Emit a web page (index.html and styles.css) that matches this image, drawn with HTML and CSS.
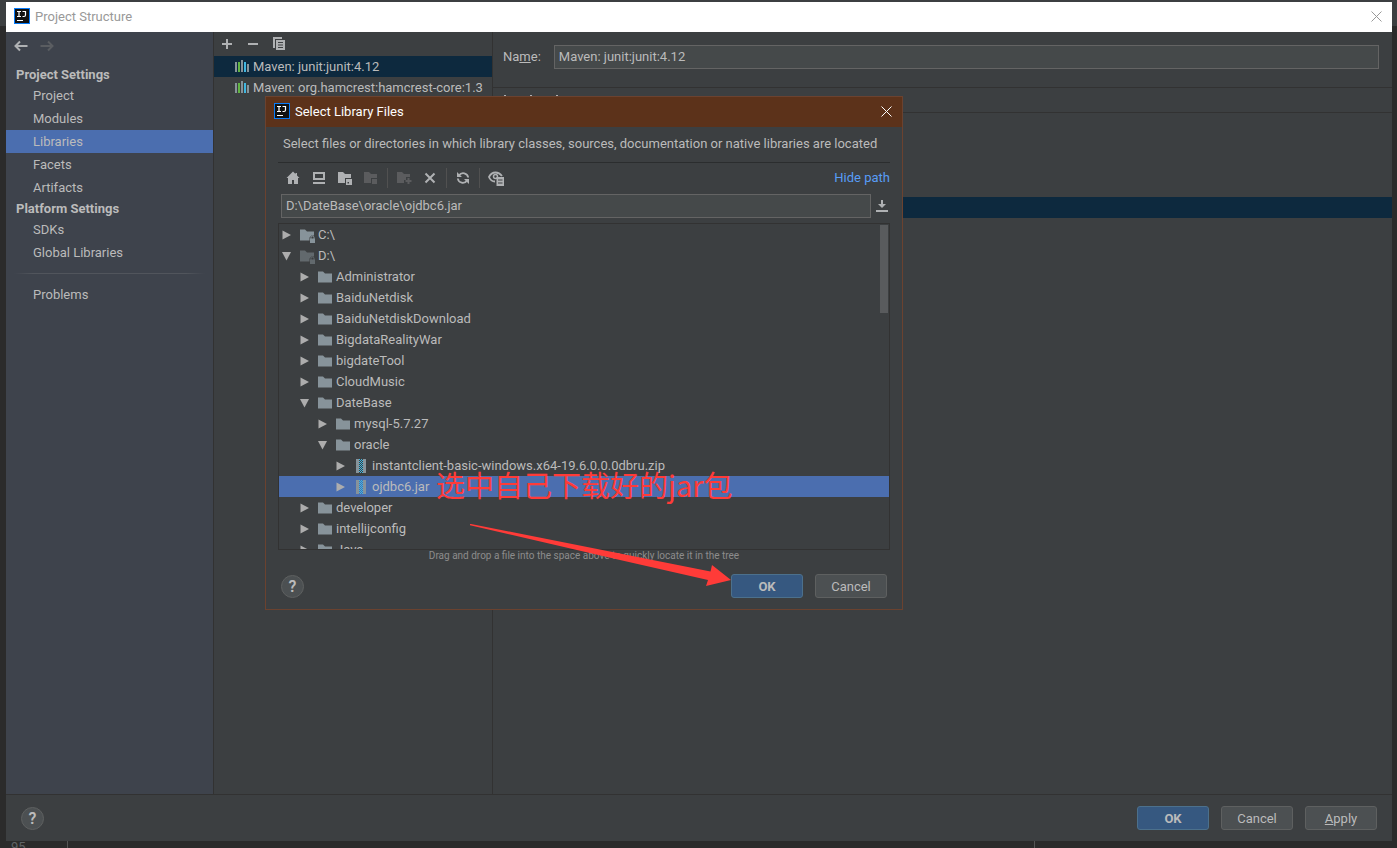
FILE: index.html
```html
<!DOCTYPE html>
<html lang="en">

<head>
    <meta charset="UTF-8">
    <title>Project Structure</title>
    <link rel="stylesheet" href="styles.css">
</head>

<body>

    <!-- Shared icons -->
    <svg class="sprite" aria-hidden="true">
        <symbol id="i-logo" viewBox="0 0 16 16">
            <rect x="0" y="0" width="16" height="16" fill="#087cfa" />
            <rect x="1" y="1" width="14" height="14" fill="#111" />
            <path d="M3 3.500h4M5 3.500v5M3 8.500h4M8.500 3.500h3v3.500q0 1.500-1.500 1.500h-1.500M3 12.500h6" fill="none" stroke="#fff" stroke-width="1.200" />
        </symbol>
        <symbol id="i-add" viewBox="0 0 16 16">
            <path d="M8 3v10M3 8h10" stroke="#afb1b3" stroke-width="2" />
        </symbol>
        <symbol id="i-remove" viewBox="0 0 16 16">
            <path d="M3 8h10" stroke="#afb1b3" stroke-width="2" />
        </symbol>
        <symbol id="i-folder" viewBox="0 0 16 16">
            <path d="M1 2.500h5l2 2h7v9H1z" fill="#87939a" />
        </symbol>
        <symbol id="i-drive" viewBox="0 0 16 16">
            <path d="M1 2.500h5l2 2h7v4h-2.500l-2 2v3H1z" fill="currentColor" />
            <path d="M11 11.500h5V16h-5z" fill="currentColor" />
            <path d="M12 12v-1.500a1.500 1.500 0 0 1 3 0V12" fill="none" stroke="currentColor" />
        </symbol>
        <symbol id="i-zip" viewBox="0 0 16 16">
            <path d="M3 1h3v14H3zM10 1h3v14h-3z" fill="#87939a" />
            <path d="M6.500 1v14M8.500 1v14" stroke="#40b6e0" stroke-dasharray="1 1" />
            <path d="M7.500 2v13M9.500 2v13" stroke="#40b6e0" stroke-dasharray="1 1" />
        </symbol>
        <symbol id="i-right" viewBox="0 0 10 10">
            <path d="M0.500 0.500L9 5L0.500 9.500z" fill="#adadad" />
        </symbol>
        <symbol id="i-down" viewBox="0 0 10 10">
            <path d="M0 1h9L4.500 9.500z" fill="#adadad" />
        </symbol>
        <symbol id="i-lib" viewBox="0 0 16 14">
            <path d="M1 2h2v10H1zM7 0h2v12H7zM13 4h2v8h-2z" fill="#87939a" />
            <path d="M4 2h2v10H4z" fill="#62b543" />
            <path d="M10 2h2v10h-2z" fill="#40b6e0" />
        </symbol>
    </svg>

    <main class="window">
        <header class="titlebar">
            <svg class="logo"><use href="#i-logo" /></svg>
            <span class="title">Project Structure</span>
            <button class="close" aria-label="Close">
                <svg viewBox="0 0 11 11"><path d="M0.500 0.500l10 10M10.500 0.500l-10 10" /></svg>
            </button>
        </header>

        <div class="panes">
            <nav class="sidebar">
                <div class="history">
                    <button class="icon-btn" aria-label="Back">
                        <svg viewBox="0 0 16 16"><path d="M14.500 8H3M7 3.500L2.500 8L7 12.500" fill="none" stroke="#afb1b3" stroke-width="2" /></svg>
                    </button>
                    <button class="icon-btn" aria-label="Forward" disabled>
                        <svg viewBox="0 0 16 16"><path d="M1.500 8H13M9 3.500L13.500 8L9 12.500" fill="none" stroke="#5a5d61" stroke-width="2" /></svg>
                    </button>
                </div>
                <h2>Project Settings</h2>
                <ul>
                    <li><a href="#">Project</a></li>
                    <li><a href="#">Modules</a></li>
                    <li><a href="#" class="active">Libraries</a></li>
                    <li><a href="#">Facets</a></li>
                    <li><a href="#">Artifacts</a></li>
                </ul>
                <h2>Platform Settings</h2>
                <ul>
                    <li><a href="#">SDKs</a></li>
                    <li><a href="#">Global Libraries</a></li>
                </ul>
                <hr>
                <ul>
                    <li><a href="#">Problems</a></li>
                </ul>
            </nav>

            <section class="libraries">
                <div class="lib-tools">
                    <button class="icon-btn" aria-label="Add">
                        <svg><use href="#i-add" /></svg>
                    </button>
                    <button class="icon-btn" aria-label="Remove">
                        <svg><use href="#i-remove" /></svg>
                    </button>
                    <button class="icon-btn" aria-label="Copy">
                        <svg viewBox="0 0 16 16">
                            <path d="M2 1h9v2H4v9H2z" fill="#afb1b3" />
                            <path d="M5 4h9v10H5zM7 6v1h5V6zM7 8.500v1h5v-1zM7 11v1h5v-1z" fill="#afb1b3" fill-rule="evenodd" />
                        </svg>
                    </button>
                </div>
                <ul>
                    <li class="selected"><svg><use href="#i-lib" /></svg>Maven: junit:junit:4.12</li>
                    <li><svg><use href="#i-lib" /></svg>Maven: org.hamcrest:hamcrest-core:1.3</li>
                </ul>
            </section>

            <section class="details">
                <div class="name-row">
                    <label for="libName">Na<u>m</u>e:</label>
                    <input type="text" id="libName" value="Maven: junit:junit:4.12">
                </div>
                <div class="root-tools">
                    <button class="icon-btn" aria-label="Add root">
                        <svg><use href="#i-add" /></svg>
                    </button>
                    <button class="icon-btn" aria-label="Add documentation">
                        <svg><use href="#i-add" /></svg>
                    </button>
                    <button class="icon-btn" aria-label="Add excluded root">
                        <svg><use href="#i-add" /></svg>
                    </button>
                    <button class="icon-btn" aria-label="Remove root">
                        <svg><use href="#i-remove" /></svg>
                    </button>
                </div>
                <div class="roots">
                    <div class="root-selected"></div>
                </div>
            </section>
        </div>

        <footer class="buttons">
            <button class="help" aria-label="Help">?</button>
            <button class="btn primary">OK</button>
            <button class="btn">Cancel</button>
            <button class="btn"><u>A</u>pply</button>
        </footer>
    </main>

    <!-- Editor behind the window -->
    <div class="editor-strip">
        <span class="gutter">95</span>
        <span class="guide"></span>
    </div>

    <section class="dialog" role="dialog" aria-labelledby="dialogTitle">
        <header class="dialog-title">
            <svg class="logo"><use href="#i-logo" /></svg>
            <span class="title" id="dialogTitle">Select Library Files</span>
            <button class="close" aria-label="Close">
                <svg viewBox="0 0 11 11"><path d="M0.500 0.500l10 10M10.500 0.500l-10 10" /></svg>
            </button>
        </header>

        <div class="dialog-body">
            <p class="description">Select files or directories in which library classes, sources, documentation or native libraries are located</p>

            <div class="toolbar">
                <button class="icon-btn" aria-label="Home">
                    <svg viewBox="0 0 16 16"><path d="M8 1.500L1.500 8H3v6h4v-4h2v4h4V8h1.500L12 5.500V3h-1.500v1z" fill="#afb1b3" /></svg>
                </button>
                <button class="icon-btn" aria-label="Desktop">
                    <svg viewBox="0 0 16 16"><path d="M2 2h12v8H2zM4 4v4h8V4zM2 12h12v2H2z" fill="#afb1b3" fill-rule="evenodd" /></svg>
                </button>
                <button class="icon-btn" aria-label="Project directory">
                    <svg viewBox="0 0 16 16">
                        <path d="M1 2h5l2 2h6v4H8v5H1z" fill="#afb1b3" />
                        <path d="M9 9h6v6H9zM10.500 12v1.500H12V12z" fill="#afb1b3" fill-rule="evenodd" />
                    </svg>
                </button>
                <button class="icon-btn" aria-label="Module directory" disabled>
                    <svg viewBox="0 0 16 16">
                        <path d="M1 2h5l2 2h6v4H8v5H1z" fill="#5b5c5e" />
                        <path d="M9 9h5v5H9z" fill="#5b5c5e" />
                    </svg>
                </button>
                <span class="divider"></span>
                <button class="icon-btn" aria-label="New folder" disabled>
                    <svg viewBox="0 0 16 16">
                        <path d="M1 2h5l2 2h6v3h-4v3H8v3H1z" fill="#5b5c5e" />
                        <path d="M12.500 8v6M9.500 11h6" stroke="#5b5c5e" stroke-width="2" />
                    </svg>
                </button>
                <button class="icon-btn" aria-label="Delete">
                    <svg viewBox="0 0 16 16"><path d="M3.500 3.500l9 9M12.500 3.500l-9 9" stroke="#afb1b3" stroke-width="2" /></svg>
                </button>
                <span class="divider"></span>
                <button class="icon-btn" aria-label="Refresh">
                    <svg viewBox="0 0 16 16">
                        <path d="M4 5.500a5 5 0 0 1 9.200 2M12 10.500a5 5 0 0 1-9.200-2" fill="none" stroke="#afb1b3" stroke-width="1.800" />
                        <path d="M2 2v5h5zM14 14V9H9z" fill="#afb1b3" />
                    </svg>
                </button>
                <span class="divider"></span>
                <button class="icon-btn" aria-label="Show hidden files">
                    <svg viewBox="0 0 16 16">
                        <path d="M7 11.500C4 11.500 2 9.500 1 7C2.500 4 5 2.500 7.500 2.500S12.500 4 14 6" fill="none" stroke="#afb1b3" stroke-width="1.800" />
                        <circle cx="7.500" cy="6.500" r="2" fill="none" stroke="#afb1b3" stroke-width="1.500" />
                        <path d="M8.500 7H16v9H8.500zM10 9.500v1h4.500v-1zM10 12.500v1h4.500v-1z" fill="#afb1b3" fill-rule="evenodd" />
                    </svg>
                </button>
                <a href="#" class="hide-path">Hide path</a>
            </div>

            <div class="path-row">
                <input type="text" aria-label="Path" value="D:\DateBase\oracle\ojdbc6.jar">
                <button class="icon-btn" aria-label="Path history">
                    <svg viewBox="0 0 16 16"><path d="M7 2h2v4h3L8 10L4 6h3zM2 12h12v2H2z" fill="#afb1b3" /></svg>
                </button>
            </div>

            <div class="tree">
                <ul>
                    <li><svg class="arrow"><use href="#i-right" /></svg><svg class="icon drive"><use href="#i-drive" /></svg>C:\</li>
                    <li><svg class="arrow"><use href="#i-down" /></svg><svg class="icon drive dim"><use href="#i-drive" /></svg>D:\</li>
                    <li class="level-1"><svg class="arrow"><use href="#i-right" /></svg><svg class="icon"><use href="#i-folder" /></svg>Administrator</li>
                    <li class="level-1"><svg class="arrow"><use href="#i-right" /></svg><svg class="icon"><use href="#i-folder" /></svg>BaiduNetdisk</li>
                    <li class="level-1"><svg class="arrow"><use href="#i-right" /></svg><svg class="icon"><use href="#i-folder" /></svg>BaiduNetdiskDownload</li>
                    <li class="level-1"><svg class="arrow"><use href="#i-right" /></svg><svg class="icon"><use href="#i-folder" /></svg>BigdataRealityWar</li>
                    <li class="level-1"><svg class="arrow"><use href="#i-right" /></svg><svg class="icon"><use href="#i-folder" /></svg>bigdateTool</li>
                    <li class="level-1"><svg class="arrow"><use href="#i-right" /></svg><svg class="icon"><use href="#i-folder" /></svg>CloudMusic</li>
                    <li class="level-1"><svg class="arrow"><use href="#i-down" /></svg><svg class="icon"><use href="#i-folder" /></svg>DateBase</li>
                    <li class="level-2"><svg class="arrow"><use href="#i-right" /></svg><svg class="icon"><use href="#i-folder" /></svg>mysql-5.7.27</li>
                    <li class="level-2"><svg class="arrow"><use href="#i-down" /></svg><svg class="icon"><use href="#i-folder" /></svg>oracle</li>
                    <li class="level-3"><svg class="arrow"><use href="#i-right" /></svg><svg class="icon"><use href="#i-zip" /></svg>instantclient-basic-windows.x64-19.6.0.0.0dbru.zip</li>
                    <li class="level-3 selected"><svg class="arrow"><use href="#i-right" /></svg><svg class="icon"><use href="#i-zip" /></svg>ojdbc6.jar</li>
                    <li class="level-1"><svg class="arrow"><use href="#i-right" /></svg><svg class="icon"><use href="#i-folder" /></svg>developer</li>
                    <li class="level-1"><svg class="arrow"><use href="#i-right" /></svg><svg class="icon"><use href="#i-folder" /></svg>intellijconfig</li>
                    <li class="level-1"><svg class="arrow"><use href="#i-right" /></svg><svg class="icon"><use href="#i-folder" /></svg>Java</li>
                </ul>
                <div class="thumb"></div>
            </div>
            <p class="hint">Drag and drop a file into the space above to quickly locate it in the tree</p>
        </div>

        <footer class="dialog-buttons">
            <button class="help" aria-label="Help">?</button>
            <button class="btn primary">OK</button>
            <button class="btn">Cancel</button>
        </footer>

        <!-- Red notes over the dialog -->
        <span class="note" lang="zh-CN">选中自己下载好的jar包</span>
        <svg class="note-arrow" viewBox="0 0 262 66">
            <path d="M0 0L1 0L240.500 47.500L242 41L261 56L236 62L238 56L150 36L0 1.200Z" />
        </svg>
    </section>

</body>

</html>
```
FILE: styles.css
```css
* {
    box-sizing: border-box;
}

body {
    margin: 0;
    height: 100vh;
    display: flex;
    flex-direction: column;
    padding: 2px 5px 0 6px;
    background: linear-gradient(#3c3f41 26px, #2b2b2b 26px);
    color: #bbbbbb;
    font-family: Roboto, "Noto Sans CJK SC", sans-serif;
    font-size: 13px;
    line-height: 21px;
}

ul {
    list-style: none;
    margin: 0;
    padding: 0;
}

button,
input {
    font: inherit;
    color: inherit;
}

.sprite {
    display: none;
}

/* Main window */
.window {
    flex: 1;
    min-height: 0;
    display: flex;
    flex-direction: column;
    background: #3c3f41;
}

.titlebar,
.dialog-title {
    display: flex;
    align-items: center;
    height: 30px;
    padding: 0 10px 2px 8px;
}

.titlebar {
    background: #ffffff;
    color: #999999;
}

.logo {
    width: 16px;
    height: 16px;
    margin-right: 5px;
}

.title {
    flex: 1;
}

.close {
    display: flex;
    padding: 0;
    border: none;
    background: none;
}

.close svg {
    width: 11px;
    height: 11px;
    fill: none;
    stroke: currentColor;
}

.icon-btn {
    display: flex;
    padding: 0;
    border: none;
    background: none;
}

.icon-btn svg {
    width: 16px;
    height: 16px;
}

.panes {
    flex: 1;
    min-height: 0;
    display: flex;
}

/* Sidebar */
.sidebar {
    width: 208px;
    background: #3e434c;
    border-right: 1px solid #323232;
}

.history {
    display: flex;
    gap: 10px;
    height: 33px;
    padding: 6px 7px;
}

.sidebar h2 {
    margin: 0;
    padding-left: 10px;
    font-size: 13px;
    line-height: 19px;
}

.sidebar a {
    display: block;
    padding-left: 27px;
    line-height: 23px;
    color: inherit;
    text-decoration: none;
}

.sidebar a.active {
    background: #4b6eaf;
}

.sidebar hr {
    height: 1px;
    margin: 9px 8px;
    border: none;
    background: linear-gradient(to right, transparent, #51555c 10%, #51555c 90%, transparent);
}

/* Library list */
.libraries {
    width: 279px;
    border-right: 1px solid #323232;
}

.lib-tools {
    display: flex;
    gap: 10px;
    height: 24px;
    padding: 4px 5px;
}

.libraries li {
    display: flex;
    align-items: center;
    padding-left: 20px;
    white-space: nowrap;
}

.libraries li svg {
    flex: none;
    width: 16px;
    height: 14px;
    margin-right: 3px;
}

.libraries .selected,
.root-selected {
    background: #0d293e;
}

/* Library details */
.details {
    flex: 1;
}

.name-row {
    display: flex;
    align-items: center;
    gap: 13px;
    height: 55px;
    padding: 0 13px 6px 10px;
}

.name-row input,
.path-row input {
    flex: 1;
    height: 24px;
    padding: 0 4px 1px;
    border: 1px solid #646464;
    background: #45494a;
}

.root-tools {
    display: flex;
    align-items: center;
    gap: 10px;
    height: 26px;
    padding-left: 4px;
    border-top: 1px solid #323232;
    border-bottom: 1px solid #323232;
}

.roots {
    padding-top: 84px;
}

.root-selected {
    height: 21px;
}

/* Buttons */
.buttons,
.dialog-buttons {
    display: flex;
    align-items: center;
    gap: 12px;
}

.buttons {
    height: 47px;
    padding: 0 15px;
    border-top: 1px solid #323232;
}

.btn {
    width: 72px;
    height: 24px;
    padding: 0;
    border: 1px solid #5e6060;
    border-radius: 3px;
    background: #4c5052;
}

.btn.primary {
    border-color: #4c708c;
    background: #365880;
    font-weight: bold;
}

.help {
    width: 23px;
    height: 23px;
    margin-right: auto;
    padding: 0;
    border: 1px solid #5e6060;
    border-radius: 50%;
    background: #4c5052;
    font-size: 16px;
    font-weight: 600;
    line-height: 21px;
}

/* Editor strip under the window */
.editor-strip {
    display: flex;
    height: 7px;
    overflow: hidden;
    color: #606366;
}

.gutter {
    width: 62px;
    padding-left: 5px;
    border-right: 1px solid #555555;
    line-height: 11px;
}

.guide {
    width: 967px;
    border-right: 1px solid #555555;
}

/* Select Library Files dialog */
.dialog {
    position: absolute;
    left: 265px;
    top: 96px;
    width: 638px;
    border: 1px solid #6b422f;
    background: #3c3f41;
}

.dialog-title {
    background: #5c321a;
    color: #ffffff;
}

.dialog-body {
    padding: 0 12px;
}

.description {
    margin: 0;
    padding: 6px 5px 8px;
    border-bottom: 1px solid #2b2d2e;
    white-space: nowrap;
}

.toolbar {
    display: flex;
    align-items: center;
    gap: 10px;
    height: 29px;
    margin-bottom: 2px;
    padding-left: 7px;
}

.divider {
    width: 1px;
    height: 20px;
    margin: 0 -2px;
    background: #515151;
}

.hide-path {
    margin-left: auto;
    color: #589df6;
    text-decoration: none;
}

.path-row {
    display: flex;
    align-items: center;
    gap: 3px;
    padding-left: 3px;
}

.tree {
    display: flex;
    justify-content: space-between;
    height: 327px;
    margin-top: 5px;
    border: 1px solid #323232;
    overflow: hidden;
}

.tree ul {
    flex: 1;
}

.tree li {
    display: flex;
    align-items: center;
    padding-left: 3px;
}

.tree .level-1 {
    padding-left: 21px;
}

.tree .level-2 {
    padding-left: 39px;
}

.tree .level-3 {
    padding-left: 57px;
}

.tree .selected {
    background: #4b6eaf;
}

.arrow {
    width: 10px;
    height: 10px;
    margin-right: 7px;
}

.icon {
    width: 16px;
    height: 16px;
    margin-right: 3px;
}

.drive {
    color: #87939a;
}

.drive.dim {
    color: #62696d;
}

/* The thumb floats over the rows */
.thumb {
    width: 8px;
    height: 88px;
    margin: 1px 1px 0 -9px;
    background: #595b5d;
}

.hint {
    margin: 0;
    color: #8c8c8c;
    font-size: 10px;
    line-height: 12px;
    text-align: center;
}

.dialog-buttons {
    padding: 12px 15px 11px;
}

.note {
    position: absolute;
    left: 170px;
    top: 367px;
    color: #ff3b38;
    font-family: "Noto Sans CJK SC", sans-serif;
    font-size: 29px;
    line-height: 40px;
    white-space: nowrap;
}

.note-arrow {
    position: absolute;
    left: 204px;
    top: 427px;
    width: 262px;
    height: 66px;
    fill: #ff3b38;
    pointer-events: none;
}
```
